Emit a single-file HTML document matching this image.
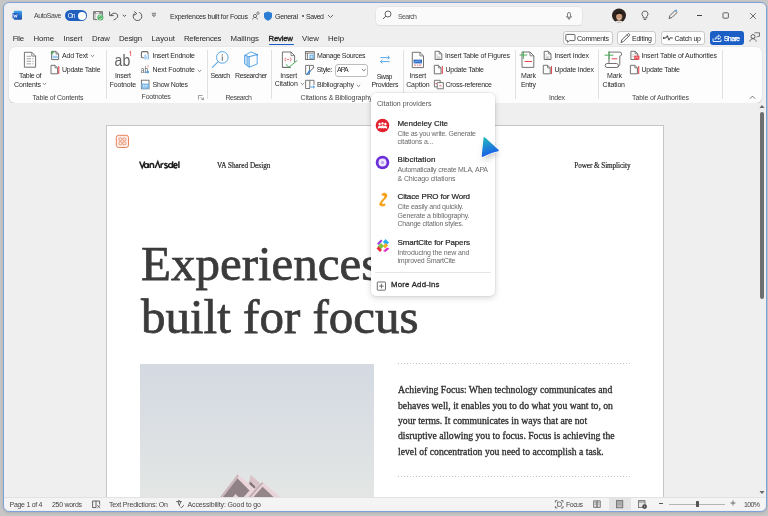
<!DOCTYPE html>
<html><head><meta charset="utf-8"><style>
html,body{margin:0;padding:0;width:768px;height:516px;overflow:hidden;background:#c6c6c6}
#root{position:absolute;left:0;top:0;width:768px;height:516px;will-change:transform}
.t{position:absolute;white-space:nowrap;font-family:"Liberation Sans",sans-serif;}
.r{position:absolute}
.s{position:absolute;overflow:visible}
</style></head><body>
<div id="root"><div class="r" style="left:0px;top:0px;width:768px;height:516px;background:#c6c6c6"></div>
<div class="r" style="left:3px;top:1.5px;width:764px;height:510px;background:#efefef;border:1.2px solid #7fa2d6;border-radius:6px;box-sizing:border-box;box-shadow:0 1px 3px rgba(0,0,0,0.12)"></div>
<svg class="s" style="left:0px;top:0px;" width="30" height="30" viewBox="0 0 30 30"><defs><linearGradient id="wg" x1="0" y1="0" x2="0" y2="1"><stop offset="0" stop-color="#41a5ee"/><stop offset="0.5" stop-color="#2b7cd3"/><stop offset="1" stop-color="#1a4fae"/></linearGradient></defs><rect x="13.8" y="10.8" width="8.2" height="9" rx="1" fill="url(#wg)"/><path d="M18 13.6h4M18 15.8h4M18 18h4" stroke="rgba(0,0,0,0.08)" stroke-width="1"/><rect x="12.5" y="12.9" width="6.4" height="5.6" rx="0.7" fill="#2360c4"/><path d="M13.6 14.2l0.9 3.2 0.9-2.4 0.9 2.4 0.9-3.2" fill="none" stroke="#fff" stroke-width="0.75" stroke-linejoin="round"/></svg>
<div class="t" style="left:34.00px;top:12.00px;font-size:7px;line-height:7px;letter-spacing:-0.407px;font-weight:400;color:#444;font-family:'Liberation Sans', sans-serif;">AutoSave</div>
<div class="r" style="left:65px;top:10px;width:22px;height:11px;background:#1f5fbf;border-radius:6px"></div>
<div class="t" style="left:67.80px;top:13.00px;font-size:6.5px;line-height:6.5px;letter-spacing:-1.171px;font-weight:400;color:#fff;font-family:'Liberation Sans', sans-serif;">On</div>
<div class="r" style="left:77.5px;top:11.5px;width:8px;height:8px;background:#fff;border-radius:50%"></div>
<svg class="s" style="left:0px;top:0px;" width="768" height="30" viewBox="0 0 768 30"><path d="M93.6 11.6h8.8v4.2M93.6 11.6v8h3.6" fill="none" stroke="#6e6e6e" stroke-width="1"/><path d="M93.6 11.6h8.8v2.2h-8.8z" fill="#8a8a8a"/><rect x="96" y="12.2" width="3.2" height="1.2" fill="#fff"/><path d="M95 13.8v5.8" stroke="#9a9a9a" stroke-width="0.8"/><circle cx="100.4" cy="17.4" r="3" fill="#4cb05e"/><path d="M98.8 17.2a1.7 1.7 0 0 1 3-1M102 17.6a1.7 1.7 0 0 1-3 1" fill="none" stroke="#fff" stroke-width="0.7"/><path d="M110.6 15.2Q113 12.6 115.6 13.2Q118.6 14.2 117.6 17Q116.8 18.6 113.6 20" fill="none" stroke="#5a5a5a" stroke-width="1"/><path d="M109.6 11.6v4h4" fill="none" stroke="#5a5a5a" stroke-width="1"/><path d="M122.8 15l1.6 1.4 1.6-1.4" fill="none" stroke="#444" stroke-width="0.9"/><path d="M134.3 13.4A4.3 4.3 0 1 0 139.2 12.3" fill="none" stroke="#5a5a5a" stroke-width="1"/><path d="M134.2 11.4l2.6 2.2-2.8 1.6" fill="none" stroke="#5a5a5a" stroke-width="1"/><path d="M151.8 13.3h4.2M152.2 15l1.7 1.7 1.7-1.7z" fill="none" stroke="#5a5a5a" stroke-width="0.8"/></svg>
<div class="t" style="left:170.00px;top:13.00px;font-size:7px;line-height:7px;letter-spacing:-0.247px;font-weight:400;color:#2a2a2a;font-family:'Liberation Sans', sans-serif;">Experiences built for Focus</div>
<svg class="s" style="left:252px;top:11px;" width="8" height="9" viewBox="0 0 8 9"><circle cx="3" cy="5" r="1.6" fill="none" stroke="#555" stroke-width="0.8"/><path d="M0.5 8.5c0.5-1.5 1.5-2 2.5-2s2 .5 2.5 2" fill="none" stroke="#555" stroke-width="0.8"/><circle cx="6" cy="2.2" r="1.2" fill="none" stroke="#555" stroke-width="0.7"/></svg>
<svg class="s" style="left:263px;top:11px;" width="10" height="10" viewBox="0 0 10 10"><path d="M5 0.5L9 2v3.2C9 7.5 7.3 9 5 9.8 2.7 9 1 7.5 1 5.2V2z" fill="#2b7cd3"/></svg>
<div class="t" style="left:275.00px;top:13.00px;font-size:7px;line-height:7px;letter-spacing:-0.318px;font-weight:400;color:#2a2a2a;font-family:'Liberation Sans', sans-serif;">General</div>
<div class="r" style="left:301.5px;top:15px;width:2px;height:2px;background:#444;border-radius:50%"></div>
<div class="t" style="left:306.00px;top:13.00px;font-size:7px;line-height:7px;letter-spacing:-0.461px;font-weight:400;color:#2a2a2a;font-family:'Liberation Sans', sans-serif;">Saved</div>
<svg class="s" style="left:327px;top:14px;" width="7" height="5" viewBox="0 0 7 5"><path d="M1 1l2.5 2.5L6 1" fill="none" stroke="#555" stroke-width="0.9"/></svg>
<div class="r" style="left:375.5px;top:6.5px;width:206px;height:18px;background:#fafafa;border-radius:4px;box-shadow:0 0 0 0.5px #dedede, 0 1px 1px rgba(0,0,0,0.08)"></div>
<svg class="s" style="left:382px;top:10px;" width="10" height="10" viewBox="0 0 10 10"><circle cx="6" cy="4" r="3" fill="none" stroke="#555" stroke-width="0.9"/><path d="M3.8 6.2L1 9" stroke="#555" stroke-width="1"/></svg>
<div class="t" style="left:398.00px;top:13.00px;font-size:7px;line-height:7px;letter-spacing:-0.635px;font-weight:400;color:#555;font-family:'Liberation Sans', sans-serif;">Search</div>
<svg class="s" style="left:566px;top:12px;" width="6" height="8" viewBox="0 0 6 8"><rect x="1.5" y="0.5" width="3" height="5" rx="1.5" fill="none" stroke="#666" stroke-width="0.8"/><path d="M0.6 4c0 1.5 1 2.3 2.4 2.3S5.4 5.5 5.4 4M3 6.3V8" fill="none" stroke="#666" stroke-width="0.8"/></svg>
<svg class="s" style="left:611px;top:8px;" width="16" height="15" viewBox="0 0 16 15"><defs><clipPath id="av"><circle cx="8" cy="7.5" r="7"/></clipPath></defs><g clip-path="url(#av)"><rect width="16" height="15" fill="#2e241f"/><ellipse cx="8.2" cy="8.6" rx="3.1" ry="3.7" fill="#c99878"/><path d="M4.6 7.6Q5 3.6 8.4 3.8Q11.6 4 11.8 7.4Q10.6 5.6 8.2 5.8Q6 6 4.6 7.6z" fill="#1d1512"/><path d="M6.6 10.6q1.6 1 3.2 0" fill="none" stroke="#f3e6e0" stroke-width="0.7"/><path d="M2 16Q4 12.6 8 12.6T14 16z" fill="#e9e1dc"/></g></svg>
<svg class="s" style="left:641px;top:10px;" width="8" height="11" viewBox="0 0 8 11"><path d="M4 1a3 3 0 0 0-1.8 5.4V8h3.6V6.4A3 3 0 0 0 4 1z" fill="none" stroke="#555" stroke-width="0.9"/><path d="M2.8 9.5h2.4" stroke="#555" stroke-width="0.9"/></svg>
<svg class="s" style="left:667px;top:9px;" width="11" height="11" viewBox="0 0 11 11"><path d="M2 9.5l1-3 5-5 2 2-5 5z" fill="none" stroke="#555" stroke-width="0.9"/><circle cx="9.2" cy="1.6" r="1" fill="#5aa8e8"/></svg>
<div class="r" style="left:696.5px;top:15.2px;width:5.5px;height:0.8px;background:#444"></div>
<svg class="s" style="left:722px;top:12px;" width="7" height="7" viewBox="0 0 7 7"><rect x="1" y="0.8" width="5.4" height="5.4" rx="0.8" fill="none" stroke="#444" stroke-width="0.8"/></svg>
<svg class="s" style="left:749px;top:12px;" width="8" height="8" viewBox="0 0 8 8"><path d="M1.2 1.2l5.6 5.6M6.8 1.2L1.2 6.8" stroke="#555" stroke-width="0.85"/></svg>
<div class="t" style="left:12.70px;top:35.00px;font-size:7.8px;line-height:7.8px;letter-spacing:-0.422px;font-weight:400;color:#2a2a2a;font-family:'Liberation Sans', sans-serif;">File</div>
<div class="t" style="left:33.50px;top:35.00px;font-size:7.8px;line-height:7.8px;letter-spacing:-0.103px;font-weight:400;color:#2a2a2a;font-family:'Liberation Sans', sans-serif;">Home</div>
<div class="t" style="left:63.50px;top:35.00px;font-size:7.8px;line-height:7.8px;letter-spacing:-0.102px;font-weight:400;color:#2a2a2a;font-family:'Liberation Sans', sans-serif;">Insert</div>
<div class="t" style="left:92.00px;top:35.00px;font-size:7.8px;line-height:7.8px;letter-spacing:-0.074px;font-weight:400;color:#2a2a2a;font-family:'Liberation Sans', sans-serif;">Draw</div>
<div class="t" style="left:119.00px;top:35.00px;font-size:7.8px;line-height:7.8px;letter-spacing:-0.256px;font-weight:400;color:#2a2a2a;font-family:'Liberation Sans', sans-serif;">Design</div>
<div class="t" style="left:151.50px;top:35.00px;font-size:7.8px;line-height:7.8px;letter-spacing:0.017px;font-weight:400;color:#2a2a2a;font-family:'Liberation Sans', sans-serif;">Layout</div>
<div class="t" style="left:184.00px;top:35.00px;font-size:7.8px;line-height:7.8px;letter-spacing:-0.265px;font-weight:400;color:#2a2a2a;font-family:'Liberation Sans', sans-serif;">References</div>
<div class="t" style="left:230.50px;top:35.00px;font-size:7.8px;line-height:7.8px;letter-spacing:-0.016px;font-weight:400;color:#2a2a2a;font-family:'Liberation Sans', sans-serif;">Mailings</div>
<div class="t" style="left:302.00px;top:35.00px;font-size:7.8px;line-height:7.8px;letter-spacing:0.071px;font-weight:400;color:#2a2a2a;font-family:'Liberation Sans', sans-serif;">View</div>
<div class="t" style="left:328.00px;top:35.00px;font-size:7.8px;line-height:7.8px;letter-spacing:-0.015px;font-weight:400;color:#2a2a2a;font-family:'Liberation Sans', sans-serif;">Help</div>
<div class="t" style="left:268.50px;top:35.00px;font-size:7.8px;line-height:7.8px;letter-spacing:-0.220px;font-weight:400;color:#222;font-family:'Liberation Sans', sans-serif;-webkit-text-stroke:0.35px #222">Review</div>
<div class="r" style="left:268.5px;top:43.5px;width:25px;height:1.5px;background:#1a5fc8;border-radius:1px"></div>
<div class="r" style="left:562.5px;top:31px;width:50.0px;height:13.8px;background:#fdfdfd;border:1px solid #c9c9c9;border-radius:3px;box-sizing:border-box"></div>
<div class="t" style="left:577.00px;top:35.00px;font-size:7px;line-height:7px;letter-spacing:-0.264px;font-weight:400;color:#2a2a2a;font-family:'Liberation Sans', sans-serif;">Comments</div>
<svg class="s" style="left:565px;top:33px;" width="11" height="11" viewBox="0 0 11 11"><path d="M1.6 1.4h7.6q0.8 0 0.8 0.8v4.6q0 0.8-0.8 0.8H4.6L2.6 9.4V7.6H1.6q-0.8 0-0.8-0.8V2.2q0-0.8 0.8-0.8z" fill="none" stroke="#555" stroke-width="0.9" stroke-linejoin="round"/></svg>
<div class="r" style="left:617px;top:31px;width:39px;height:13.8px;background:#fdfdfd;border:1px solid #c9c9c9;border-radius:3px;box-sizing:border-box"></div>
<div class="t" style="left:632.00px;top:35.00px;font-size:7px;line-height:7px;letter-spacing:-0.234px;font-weight:400;color:#2a2a2a;font-family:'Liberation Sans', sans-serif;">Editing</div>
<svg class="s" style="left:619px;top:32px;" width="12" height="12" viewBox="0 0 12 12"><path d="M2 10.6l0.7-2.6 6-6q0.8-0.8 1.6 0t0 1.6l-6 6z" fill="none" stroke="#555" stroke-width="0.95" stroke-linejoin="round"/><path d="M7.8 2.8l1.6 1.6" stroke="#555" stroke-width="0.8"/></svg>
<div class="r" style="left:660.5px;top:31px;width:44.5px;height:13.8px;background:#fdfdfd;border:1px solid #c9c9c9;border-radius:3px;box-sizing:border-box"></div>
<div class="t" style="left:674.50px;top:35.00px;font-size:7px;line-height:7px;letter-spacing:-0.216px;font-weight:400;color:#2a2a2a;font-family:'Liberation Sans', sans-serif;">Catch up</div>
<svg class="s" style="left:662px;top:33px;" width="12" height="10" viewBox="0 0 12 10"><circle cx="1.8" cy="5" r="0.9" fill="#333"/><path d="M2.6 5h1.4l1.3-2.4 1.6 4.6 1.4-2.6 0.7 0.4h1.8" fill="none" stroke="#333" stroke-width="0.9" stroke-linejoin="round"/></svg>
<div class="r" style="left:709.5px;top:31px;width:34.5px;height:14px;background:#1b5fc6;border-radius:3px"></div>
<svg class="s" style="left:712px;top:34px;" width="10" height="8" viewBox="0 0 10 8"><path d="M1 4.5v3h8v-2" fill="none" stroke="#fff" stroke-width="0.9"/><path d="M3 5.5c0-2 1.5-3 3.5-3V1l2.5 2.3-2.5 2.2V4C5 4 3.8 4.5 3 5.5z" fill="none" stroke="#fff" stroke-width="0.8"/></svg>
<div class="t" style="left:723.75px;top:35.00px;font-size:7.2px;line-height:7.2px;letter-spacing:-0.702px;font-weight:400;color:#fff;font-family:'Liberation Sans', sans-serif;-webkit-text-stroke:0.25px #fff">Share</div>
<svg class="s" style="left:749px;top:32px;" width="12" height="10" viewBox="0 0 12 10"><circle cx="4" cy="4.5" r="2" fill="none" stroke="#555" stroke-width="0.9"/><path d="M0.8 9.5c0.5-2 1.7-2.8 3.2-2.8s2.7.8 3.2 2.8" fill="none" stroke="#555" stroke-width="0.9"/><path d="M5.5 0.8h5v3.5H8.5l-1.2 1.2" fill="none" stroke="#555" stroke-width="0.8"/></svg>
<div class="r" style="left:8.5px;top:47px;width:753px;height:55.5px;background:#fdfdfd;border-radius:6px;box-shadow:0 1px 1px rgba(0,0,0,0.14),0 0 0 0.5px rgba(0,0,0,0.05)"></div>
<div class="r" style="left:105.5px;top:50px;width:0.8px;height:49px;background:#e1e1e1"></div>
<div class="r" style="left:206.5px;top:50px;width:0.8px;height:49px;background:#e1e1e1"></div>
<div class="r" style="left:271px;top:50px;width:0.8px;height:49px;background:#e1e1e1"></div>
<div class="r" style="left:402.5px;top:50px;width:0.8px;height:49px;background:#e1e1e1"></div>
<div class="r" style="left:514.5px;top:50px;width:0.8px;height:49px;background:#e1e1e1"></div>
<div class="r" style="left:598px;top:50px;width:0.8px;height:49px;background:#e1e1e1"></div>
<div class="r" style="left:721.5px;top:50px;width:0.8px;height:49px;background:#e1e1e1"></div>
<div class="t" style="left:19.00px;top:72.00px;font-size:7px;line-height:7px;letter-spacing:-0.291px;font-weight:400;color:#2a2a2a;font-family:'Liberation Sans', sans-serif;">Table of</div>
<div class="t" style="left:14.00px;top:81.00px;font-size:7px;line-height:7px;letter-spacing:-0.145px;font-weight:400;color:#2a2a2a;font-family:'Liberation Sans', sans-serif;">Contents</div>
<svg class="s" style="left:42px;top:82px;" width="5" height="4" viewBox="0 0 5 4"><path d="M0.8 1l1.7 1.6 1.7-1.6" fill="none" stroke="#555" stroke-width="0.7"/></svg>
<div class="t" style="left:61.90px;top:52.00px;font-size:7px;line-height:7px;letter-spacing:-0.144px;font-weight:400;color:#2a2a2a;font-family:'Liberation Sans', sans-serif;">Add Text</div>
<svg class="s" style="left:90px;top:54px;" width="5" height="4" viewBox="0 0 5 4"><path d="M0.8 1l1.7 1.6 1.7-1.6" fill="none" stroke="#555" stroke-width="0.7"/></svg>
<div class="t" style="left:61.90px;top:66.00px;font-size:7px;line-height:7px;letter-spacing:-0.220px;font-weight:400;color:#2a2a2a;font-family:'Liberation Sans', sans-serif;">Update Table</div>
<div class="t" style="left:32.50px;top:94.00px;font-size:7px;line-height:7px;letter-spacing:-0.218px;font-weight:400;color:#444;font-family:'Liberation Sans', sans-serif;">Table of Contents</div>
<div class="t" style="left:114.90px;top:72.00px;font-size:7px;line-height:7px;letter-spacing:-0.281px;font-weight:400;color:#2a2a2a;font-family:'Liberation Sans', sans-serif;">Insert</div>
<div class="t" style="left:109.70px;top:81.00px;font-size:7px;line-height:7px;letter-spacing:-0.161px;font-weight:400;color:#2a2a2a;font-family:'Liberation Sans', sans-serif;">Footnote</div>
<div class="t" style="left:152.50px;top:52.00px;font-size:7px;line-height:7px;letter-spacing:-0.233px;font-weight:400;color:#2a2a2a;font-family:'Liberation Sans', sans-serif;">Insert Endnote</div>
<div class="t" style="left:152.60px;top:66.00px;font-size:7px;line-height:7px;letter-spacing:-0.131px;font-weight:400;color:#2a2a2a;font-family:'Liberation Sans', sans-serif;">Next Footnote</div>
<svg class="s" style="left:197px;top:69px;" width="5" height="4" viewBox="0 0 5 4"><path d="M0.8 1l1.7 1.6 1.7-1.6" fill="none" stroke="#555" stroke-width="0.7"/></svg>
<div class="t" style="left:152.60px;top:81.00px;font-size:7px;line-height:7px;letter-spacing:-0.260px;font-weight:400;color:#2a2a2a;font-family:'Liberation Sans', sans-serif;">Show Notes</div>
<div class="t" style="left:141.60px;top:93.00px;font-size:7px;line-height:7px;letter-spacing:-0.241px;font-weight:400;color:#444;font-family:'Liberation Sans', sans-serif;">Footnotes</div>
<svg class="s" style="left:198px;top:95px;" width="7" height="5" viewBox="0 0 7 5"><path d="M0.5 0.5h4M0.5 0.5v4" stroke="#777" stroke-width="0.7"/><path d="M2.5 2.5l3 2M5.5 2.5v2h-2" fill="none" stroke="#777" stroke-width="0.7"/></svg>
<div class="t" style="left:210.60px;top:72.00px;font-size:7px;line-height:7px;letter-spacing:-0.535px;font-weight:400;color:#2a2a2a;font-family:'Liberation Sans', sans-serif;">Search</div>
<div class="t" style="left:235.10px;top:72.00px;font-size:7px;line-height:7px;letter-spacing:-0.454px;font-weight:400;color:#2a2a2a;font-family:'Liberation Sans', sans-serif;">Researcher</div>
<div class="t" style="left:225.50px;top:94.00px;font-size:7px;line-height:7px;letter-spacing:-0.494px;font-weight:400;color:#444;font-family:'Liberation Sans', sans-serif;">Research</div>
<div class="t" style="left:280.30px;top:72.00px;font-size:7px;line-height:7px;letter-spacing:-0.121px;font-weight:400;color:#2a2a2a;font-family:'Liberation Sans', sans-serif;">Insert</div>
<div class="t" style="left:274.70px;top:80.00px;font-size:7px;line-height:7px;letter-spacing:-0.091px;font-weight:400;color:#2a2a2a;font-family:'Liberation Sans', sans-serif;">Citation</div>
<svg class="s" style="left:300px;top:82px;" width="5" height="4" viewBox="0 0 5 4"><path d="M0.8 1l1.7 1.6 1.7-1.6" fill="none" stroke="#555" stroke-width="0.7"/></svg>
<div class="t" style="left:317.00px;top:52.00px;font-size:7px;line-height:7px;letter-spacing:-0.340px;font-weight:400;color:#2a2a2a;font-family:'Liberation Sans', sans-serif;">Manage Sources</div>
<div class="t" style="left:316.80px;top:66.00px;font-size:7px;line-height:7px;letter-spacing:-0.381px;font-weight:400;color:#2a2a2a;font-family:'Liberation Sans', sans-serif;">Style:</div>
<div class="r" style="left:334.5px;top:63.5px;width:33px;height:13px;background:#fff;border:0.8px solid #bdbdbd;border-radius:3px;box-sizing:border-box"></div>
<div class="t" style="left:337.10px;top:66.00px;font-size:7px;line-height:7px;letter-spacing:-0.945px;font-weight:400;color:#2a2a2a;font-family:'Liberation Sans', sans-serif;">APA</div>
<svg class="s" style="left:361px;top:68px;" width="6" height="4" viewBox="0 0 6 4"><path d="M0.8 1l2 1.8 2-1.8" fill="none" stroke="#555" stroke-width="0.8"/></svg>
<div class="t" style="left:317.00px;top:81.00px;font-size:7px;line-height:7px;letter-spacing:-0.138px;font-weight:400;color:#2a2a2a;font-family:'Liberation Sans', sans-serif;">Bibliography</div>
<svg class="s" style="left:356px;top:84px;" width="5" height="4" viewBox="0 0 5 4"><path d="M0.8 1l1.7 1.6 1.7-1.6" fill="none" stroke="#555" stroke-width="0.7"/></svg>
<div class="t" style="left:376.80px;top:73.00px;font-size:7px;line-height:7px;letter-spacing:-0.636px;font-weight:400;color:#2a2a2a;font-family:'Liberation Sans', sans-serif;">Swap</div>
<div class="t" style="left:371.50px;top:81.00px;font-size:7px;line-height:7px;letter-spacing:-0.334px;font-weight:400;color:#2a2a2a;font-family:'Liberation Sans', sans-serif;">Providers</div>
<div class="t" style="left:300.50px;top:94.00px;font-size:7px;line-height:7px;letter-spacing:-0.101px;font-weight:400;color:#444;font-family:'Liberation Sans', sans-serif;">Citations &amp; Bibliography</div>
<div class="t" style="left:409.60px;top:72.00px;font-size:7px;line-height:7px;letter-spacing:-0.181px;font-weight:400;color:#2a2a2a;font-family:'Liberation Sans', sans-serif;">Insert</div>
<div class="t" style="left:406.20px;top:81.00px;font-size:7px;line-height:7px;letter-spacing:-0.122px;font-weight:400;color:#2a2a2a;font-family:'Liberation Sans', sans-serif;">Caption</div>
<div class="t" style="left:445.00px;top:52.00px;font-size:7px;line-height:7px;letter-spacing:-0.188px;font-weight:400;color:#2a2a2a;font-family:'Liberation Sans', sans-serif;">Insert Table of Figures</div>
<div class="t" style="left:445.50px;top:66.00px;font-size:7px;line-height:7px;letter-spacing:-0.239px;font-weight:400;color:#2a2a2a;font-family:'Liberation Sans', sans-serif;">Update Table</div>
<div class="t" style="left:445.50px;top:81.00px;font-size:7px;line-height:7px;letter-spacing:-0.263px;font-weight:400;color:#2a2a2a;font-family:'Liberation Sans', sans-serif;">Cross-reference</div>
<div class="t" style="left:521.00px;top:72.00px;font-size:7px;line-height:7px;letter-spacing:-0.189px;font-weight:400;color:#2a2a2a;font-family:'Liberation Sans', sans-serif;">Mark</div>
<div class="t" style="left:521.00px;top:81.00px;font-size:7px;line-height:7px;letter-spacing:-0.335px;font-weight:400;color:#2a2a2a;font-family:'Liberation Sans', sans-serif;">Entry</div>
<div class="t" style="left:554.50px;top:52.00px;font-size:7px;line-height:7px;letter-spacing:-0.189px;font-weight:400;color:#2a2a2a;font-family:'Liberation Sans', sans-serif;">Insert Index</div>
<div class="t" style="left:554.50px;top:66.00px;font-size:7px;line-height:7px;letter-spacing:-0.195px;font-weight:400;color:#2a2a2a;font-family:'Liberation Sans', sans-serif;">Update Index</div>
<div class="t" style="left:549.00px;top:94.00px;font-size:7px;line-height:7px;letter-spacing:-0.280px;font-weight:400;color:#444;font-family:'Liberation Sans', sans-serif;">Index</div>
<div class="t" style="left:607.00px;top:72.00px;font-size:7px;line-height:7px;letter-spacing:-0.189px;font-weight:400;color:#2a2a2a;font-family:'Liberation Sans', sans-serif;">Mark</div>
<div class="t" style="left:602.50px;top:81.00px;font-size:7px;line-height:7px;letter-spacing:-0.177px;font-weight:400;color:#2a2a2a;font-family:'Liberation Sans', sans-serif;">Citation</div>
<div class="t" style="left:641.50px;top:52.00px;font-size:7px;line-height:7px;letter-spacing:-0.115px;font-weight:400;color:#2a2a2a;font-family:'Liberation Sans', sans-serif;">Insert Table of Authorities</div>
<div class="t" style="left:641.50px;top:66.00px;font-size:7px;line-height:7px;letter-spacing:-0.239px;font-weight:400;color:#2a2a2a;font-family:'Liberation Sans', sans-serif;">Update Table</div>
<div class="t" style="left:632.00px;top:94.00px;font-size:7px;line-height:7px;letter-spacing:-0.113px;font-weight:400;color:#444;font-family:'Liberation Sans', sans-serif;">Table of Authorities</div>
<svg class="s" style="left:0px;top:0px;" width="768" height="110" viewBox="0 0 768 110"><path d="M24.4 52.3H31.8L35.6 56.099999999999994V67.2H24.4Z" fill="#fdfdfd" stroke="#6b6b6b" stroke-width="0.95" stroke-linejoin="round"/><path d="M31.8 52.3V56.099999999999994H35.6" fill="none" stroke="#6b6b6b" stroke-width="0.8"/><path d="M26.6 56.3h4.5M26.6 58.8h4.5M26.6 61.3h4.5M26.6 63.8h4.5M32.3 58.8h1.2M32.3 61.3h1.2M32.3 63.8h1.2" stroke="#8a8a8a" stroke-width="0.75"/><path d="M51.6 51.4H56.0L58.6 54.0V59.6H51.6Z" fill="#fdfdfd" stroke="#6b6b6b" stroke-width="0.95" stroke-linejoin="round"/><path d="M56.0 51.4V54.0H58.6" fill="none" stroke="#6b6b6b" stroke-width="0.8"/><rect x="52.6" y="55.8" width="5" height="2.4" fill="#7fbdf0"/><path d="M53 57h4" stroke="#fff" stroke-width="0.5"/><path d="M50.6 52.6h3.6M52.4 50.8v3.6" stroke="#4cae5a" stroke-width="0.9"/><path d="M51 65.3H55.0L57.6 67.89999999999999V73.8H51Z" fill="#fdfdfd" stroke="#6b6b6b" stroke-width="0.95" stroke-linejoin="round"/><path d="M55.0 65.3V67.89999999999999H57.6" fill="none" stroke="#6b6b6b" stroke-width="0.8"/><path d="M58.8 66V74" stroke="#e8474f" stroke-width="1.1"/><text x="114.6" y="65.5" font-size="16.5" font-family="Liberation Sans" fill="#5e5e5e" textLength="15.6" lengthAdjust="spacingAndGlyphs">ab</text><path d="M129.4 52.2L130.6 51.2V55.8" fill="none" stroke="#e8474f" stroke-width="0.8"/><rect x="141.4" y="51.6" width="6.6" height="6.2" rx="1.3" fill="#fdfdfd" stroke="#6b6b6b" stroke-width="1.1"/><rect x="143.8" y="54.4" width="5.6" height="5.4" fill="#fdfdfd"/><path d="M145 55v4.2h0.8M148.4 55v4.2h-0.8M145 55h0.8M148.4 55h-0.8M146.7 56.5v2" fill="none" stroke="#3d97e3" stroke-width="0.7"/><text x="140.8" y="72.6" font-size="8.6" font-family="Liberation Sans" fill="#666" textLength="7.4" lengthAdjust="spacingAndGlyphs">ab</text><path d="M148 65.2v2.2" stroke="#e8474f" stroke-width="0.6"/><path d="M144.8 72h4M147.6 70.6l1.4 1.4-1.4 1.4" fill="none" stroke="#3d97e3" stroke-width="0.9"/><rect x="141.4" y="80.2" width="7.6" height="8.6" fill="#fdfdfd" stroke="#6b6b6b" stroke-width="0.9"/><rect x="141.4" y="83.6" width="7.6" height="5.2" fill="#74b6ec"/><rect x="143.4" y="85.2" width="3.6" height="1.8" fill="none" stroke="#fff" stroke-width="0.5"/><circle cx="222.3" cy="57.4" r="5.8" fill="#fdfdfd" stroke="#56a7e6" stroke-width="1"/><circle cx="222.3" cy="54.9" r="0.6" fill="#555"/><path d="M222.3 56.4v4.4" stroke="#555" stroke-width="0.9"/><path d="M218.2 61.6L212.4 67.4" stroke="#56a7e6" stroke-width="1.1" stroke-linecap="round"/><g fill="#fdfdfd" stroke="#4a9de3" stroke-width="0.9" stroke-linejoin="round"><path d="M244.6 55.4L251 51.9 257.2 54.6 249.2 56.8z"/><path d="M244.6 55.4V63.8L249.2 67.2V56.8z"/><path d="M249.2 56.8L257.2 54.6V64L249.2 67.2z"/></g><path d="M246.1 56.3V64.9M247.6 56.6V66.1" stroke="#4a9de3" stroke-width="0.7"/><circle cx="257" cy="54.8" r="0.8" fill="#2f86dc"/><path d="M282.4 52H291L294.6 55.6V62.2M290.6 67.4H282.4Z" fill="#fdfdfd" stroke="#6b6b6b" stroke-width="0.95" stroke-linejoin="round"/><path d="M282.4 52V67.4" stroke="#6b6b6b" stroke-width="0.95"/><path d="M291 52V55.6H294.6" fill="none" stroke="#6b6b6b" stroke-width="0.8"/><path d="M285.6 57.6Q284.2 59.5 285.6 61.4M290.4 57.6Q291.8 59.5 290.4 61.4M286.9 59.5h2.2" fill="none" stroke="#ec6a70" stroke-width="0.9"/><path d="M285.8 64.2L288.9 67.2L297.3 60.4" fill="none" stroke="#4cae5a" stroke-width="1"/><rect x="305.4" y="51.6" width="8.9" height="7.9" fill="#fdfdfd" stroke="#6b6b6b" stroke-width="0.9"/><path d="M305.4 53.1h8.9M307.4 53.1v6.4" stroke="#6b6b6b" stroke-width="0.9"/><rect x="309.4" y="54.6" width="4.4" height="4.4" fill="#74b6ec"/><path d="M311.6 55.6v2.4M310.4 56.8h2.4" stroke="#fff" stroke-width="0.6"/><path d="M305.6 65.4h3.9v8.8h-3.9z" fill="#fdfdfd" stroke="#6b6b6b" stroke-width="0.9"/><path d="M309.5 65.4h3.9v2.6" fill="none" stroke="#6b6b6b" stroke-width="0.9"/><path d="M313.9 67.4L310 71.4" stroke="#555" stroke-width="0.9"/><path d="M310.4 71L307 74.8Q306.6 75 306.8 74.5L309.4 70.4z" fill="#2f86dc" stroke="#2f86dc" stroke-width="0.9" stroke-linejoin="round"/><path d="M305.6 80.3h4.2v8.2h-4.2zM309.8 80.3h4.2v4.6" fill="#fdfdfd" stroke="#6b6b6b" stroke-width="0.9"/><path d="M310.4 87h4M313 85.6l1.5 1.4-1.5 1.4" fill="none" stroke="#3d97e3" stroke-width="0.9"/><path d="M380.4 57.6h9M387.6 55.9l1.9 1.7-1.9 1.7M389.6 61.6h-9M382.4 59.9l-1.9 1.7 1.9 1.7" fill="none" stroke="#4aa0e6" stroke-width="0.9"/><path d="M412.3 52.3H419.9L423.5 55.9V67.6H412.3Z" fill="#fdfdfd" stroke="#6b6b6b" stroke-width="0.95" stroke-linejoin="round"/><path d="M419.9 52.3V55.9H423.5" fill="none" stroke="#6b6b6b" stroke-width="0.8"/><rect x="413.6" y="59.6" width="8.4" height="3.8" fill="#2b6cc4"/><path d="M414.4 62.6l1.8-1.6 1.4 1 1.4-1.4 2 2" fill="none" stroke="#bfe0ff" stroke-width="0.6"/><path d="M414.2 65.1h1.8M416.8 65.1h1.4M419 65.1h2.4" stroke="#e8474f" stroke-width="0.8"/><path d="M435.1 51.3H439.2L441.8 53.9V59.5H435.1Z" fill="#fdfdfd" stroke="#6b6b6b" stroke-width="0.95" stroke-linejoin="round"/><path d="M439.2 51.3V53.9H441.8" fill="none" stroke="#6b6b6b" stroke-width="0.8"/><path d="M436.5 55h1.2M436.5 57h3.8M436.5 58.3h3.8" stroke="#8a8a8a" stroke-width="0.55"/><path d="M434.3 65.3H438.4L441 67.89999999999999V73.8H434.3Z" fill="#fdfdfd" stroke="#6b6b6b" stroke-width="0.95" stroke-linejoin="round"/><path d="M438.4 65.3V67.89999999999999H441" fill="none" stroke="#6b6b6b" stroke-width="0.8"/><path d="M442.3 66V74" stroke="#e8474f" stroke-width="1.1"/><path d="M434.4 80.3h5.8v6.6h-5.8z" fill="#fdfdfd" stroke="#6b6b6b" stroke-width="0.9"/><path d="M437.2 82.6h6.2v6.2h-6.2z" fill="#fdfdfd" stroke="#6b6b6b" stroke-width="0.9"/><path d="M435.4 83.6h1.4M439.4 85.8h2" stroke="#e8474f" stroke-width="0.9"/><path d="M522 52H530.0L533.8 55.8V67.4H522Z" fill="#fdfdfd" stroke="#6b6b6b" stroke-width="0.95" stroke-linejoin="round"/><path d="M530.0 52V55.8H533.8" fill="none" stroke="#6b6b6b" stroke-width="0.8"/><path d="M519.6 55h7.6M523.4 51.2v7.6" stroke="#4cae5a" stroke-width="1"/><path d="M524.6 61.5h7.4" stroke="#e8474f" stroke-width="1"/><path d="M544.2 51.3H548.4L551 53.9V59.5H544.2Z" fill="#fdfdfd" stroke="#6b6b6b" stroke-width="0.95" stroke-linejoin="round"/><path d="M548.4 51.3V53.9H551" fill="none" stroke="#6b6b6b" stroke-width="0.8"/><path d="M545.6 55h1.2M545.6 57h3.8M545.6 58.3h3.8" stroke="#8a8a8a" stroke-width="0.55"/><path d="M543.3 65.3H547.6L550.2 67.89999999999999V73.8H543.3Z" fill="#fdfdfd" stroke="#6b6b6b" stroke-width="0.95" stroke-linejoin="round"/><path d="M547.6 65.3V67.89999999999999H550.2" fill="none" stroke="#6b6b6b" stroke-width="0.8"/><path d="M551.5 66V74" stroke="#e8474f" stroke-width="1.1"/><g fill="#fdfdfd" stroke="#6b6b6b" stroke-width="0.95" stroke-linejoin="round"><path d="M609 63.4V52.1H619.6Q621.6 52.1 621.6 54.1Q621.6 56 619.8 56V64.5L617.8 67.5"/><path d="M607 63.5H616.4Q618.4 63.5 618.4 65.5Q618.4 67.5 616.4 67.5H607Q605.2 67.5 605.2 65.5Q605.2 63.5 607 63.5Z"/></g><path d="M604.6 55.2h8.8M609 51v8.6" stroke="#4cae5a" stroke-width="1"/><path d="M611.6 58.8h5.6" stroke="#e8474f" stroke-width="1"/><path d="M630.9 51.3H635.1999999999999L637.8 53.9V59.5H630.9Z" fill="#fdfdfd" stroke="#6b6b6b" stroke-width="0.95" stroke-linejoin="round"/><path d="M635.1999999999999 51.3V53.9H637.8" fill="none" stroke="#6b6b6b" stroke-width="0.8"/><path d="M632.3 54.8h1.2M632.3 56.6h1.4" stroke="#8a8a8a" stroke-width="0.55"/><path d="M634.2 55.6h5.2v4.2h-5.2z" fill="#e8474f"/><path d="M635.4 58.6l1.4-2 1.4 2" fill="none" stroke="#fff" stroke-width="0.5"/><path d="M630.4 65.3H634.8L637.4 67.89999999999999V73.8H630.4Z" fill="#fdfdfd" stroke="#6b6b6b" stroke-width="0.95" stroke-linejoin="round"/><path d="M634.8 65.3V67.89999999999999H637.4" fill="none" stroke="#6b6b6b" stroke-width="0.8"/><path d="M638.7 66V74" stroke="#e8474f" stroke-width="1.1"/></svg>
<svg class="s" style="left:749px;top:95px;" width="7" height="5" viewBox="0 0 7 5"><path d="M0.8 3.8l2.7-2.7 2.7 2.7" fill="none" stroke="#555" stroke-width="0.8"/></svg>
<div class="r" style="left:4px;top:103px;width:756px;height:394px;background:#efefef"></div>
<div class="r" style="left:107px;top:126px;width:556px;height:371px;background:#fff;box-shadow:0 0 0 1px #c6c6c6"></div>
<svg class="s" style="left:759px;top:104px;" width="6" height="5" viewBox="0 0 6 5"><path d="M0.5 4L3 1l2.5 3z" fill="#666"/></svg>
<div class="r" style="left:760px;top:112px;width:4px;height:186.5px;background:#6f6f6f;border-radius:2px"></div>
<svg class="s" style="left:759px;top:490px;" width="6" height="5" viewBox="0 0 6 5"><path d="M0.5 1L3 4l2.5-3z" fill="#666"/></svg>
<svg class="s" style="left:115px;top:134px;" width="15" height="15" viewBox="0 0 15 15"><rect x="1.3" y="1.3" width="12.2" height="12.2" rx="2.2" fill="#fcefe9" stroke="#e9825c" stroke-width="1"/><g fill="none" stroke="#e9825c" stroke-width="0.8"><rect x="3.9" y="3.9" width="3.1" height="3" rx="1.2"/><rect x="7.8" y="3.9" width="3.1" height="3" rx="1.2"/><rect x="3.9" y="7.9" width="3.1" height="3" rx="1.2"/><rect x="7.8" y="7.9" width="3.1" height="3" rx="1.2"/></g></svg>
<svg class="s" style="left:136px;top:156px;" width="48" height="16" viewBox="0 0 48 16"><g fill="none" stroke="#1e1e1e" stroke-width="1.45" stroke-linecap="butt"><path d="M3.6 5.4L6.2 11.8 8.7 5.4"/><circle cx="10.3" cy="9.6" r="2"/><path d="M12.3 7.4V11.9"/><path d="M14.1 11.9V7.4M14.1 9.4Q14.1 7.5 15.9 7.5Q17.6 7.5 17.6 9.4V11.9"/><path d="M19.2 11.9L21.8 5.5 23.9 11.9"/><path d="M25.1 11.9V7.4M25.1 9.5Q25.1 7.5 27.6 7.5"/><path d="M31.4 8Q30.6 7.4 29.6 7.5Q28.5 7.7 28.8 8.8Q29.1 9.5 30.3 9.7Q31.6 10 31.5 10.9Q31.3 11.9 29.9 11.9Q28.9 11.9 28.4 11.3"/><circle cx="34.6" cy="9.6" r="2"/><path d="M36.6 5.3V11.9"/><path d="M37.9 9.6H41Q41 7.5 39.5 7.5Q37.8 7.5 37.8 9.7Q37.8 11.9 39.5 11.9Q40.5 11.9 41 11.3"/><path d="M42.9 5.3V11.9"/></g></svg>
<div class="t" style="left:217.00px;top:163.00px;font-size:7.2px;line-height:7.2px;letter-spacing:0.029px;font-weight:400;color:#2a2a2a;font-family:'Liberation Serif', serif;-webkit-text-stroke:0.2px #2a2a2a">VA Shared Design</div>
<div class="t" style="left:574.30px;top:163.00px;font-size:7.2px;line-height:7.2px;letter-spacing:-0.076px;font-weight:400;color:#2a2a2a;font-family:'Liberation Serif', serif;-webkit-text-stroke:0.2px #2a2a2a">Power &amp; Simplicity</div>
<div class="t" style="left:141.00px;top:239.00px;font-size:49px;line-height:49px;letter-spacing:0.000px;font-weight:400;color:#3b3b3b;font-family:'Liberation Serif', serif;-webkit-text-stroke:0.75px #3b3b3b">Experiences</div>
<div class="t" style="left:141.00px;top:292.00px;font-size:49px;line-height:49px;letter-spacing:0.000px;font-weight:400;color:#3b3b3b;font-family:'Liberation Serif', serif;-webkit-text-stroke:0.75px #3b3b3b">built for focus</div>
<div class="r" style="left:398px;top:363px;width:234px;height:1px;background-image:linear-gradient(90deg,#c4c4c4 50%,transparent 50%);background-size:3px 1px"></div>
<div class="r" style="left:398px;top:475.5px;width:234px;height:1px;background-image:linear-gradient(90deg,#c4c4c4 50%,transparent 50%);background-size:3px 1px"></div>
<div class="t" style="left:398.00px;top:385.00px;font-size:9.7px;line-height:9.7px;letter-spacing:0.000px;font-weight:400;color:#2e2e2e;font-family:'Liberation Serif', serif;-webkit-text-stroke:0.3px #2e2e2e">Achieving Focus: When technology communicates and</div>
<div class="t" style="left:398.00px;top:401.00px;font-size:9.7px;line-height:9.7px;letter-spacing:0.000px;font-weight:400;color:#2e2e2e;font-family:'Liberation Serif', serif;-webkit-text-stroke:0.3px #2e2e2e">behaves well, it enables you to do what you want to, on</div>
<div class="t" style="left:398.00px;top:416.00px;font-size:9.7px;line-height:9.7px;letter-spacing:0.000px;font-weight:400;color:#2e2e2e;font-family:'Liberation Serif', serif;-webkit-text-stroke:0.3px #2e2e2e">your terms. It communicates in ways that are not</div>
<div class="t" style="left:398.00px;top:431.00px;font-size:9.7px;line-height:9.7px;letter-spacing:0.000px;font-weight:400;color:#2e2e2e;font-family:'Liberation Serif', serif;-webkit-text-stroke:0.3px #2e2e2e">disruptive allowing you to focus. Focus is achieving the</div>
<div class="t" style="left:398.00px;top:447.00px;font-size:9.7px;line-height:9.7px;letter-spacing:0.000px;font-weight:400;color:#2e2e2e;font-family:'Liberation Serif', serif;-webkit-text-stroke:0.3px #2e2e2e">level of concentration you need to accomplish a task.</div>
<div class="r" style="left:139.5px;top:364px;width:234.5px;height:133px;background:linear-gradient(#d4d9e2,#e3e6e4)"></div>
<svg class="s" style="left:205px;top:460px;" width="90" height="37" viewBox="0 0 90 37"><path d="M40 37L45.7 14.7 58 26 55 37z" fill="#d9c3c7"/><path d="M45.2 21.5L50.5 27 48 30 44 25z" fill="#7d7074"/><path d="M15.2 37L32.8 14.1 52 31 46 37z" fill="#ead6da"/><path d="M17.8 37L32.4 18.2 44.5 30.5 38.7 37z" fill="#8f8185"/><path d="M15.2 37L32.8 14.1 33.5 16.5 18 37z" fill="#c9b5ba"/><path d="M28 37l2.5-3 3 3z" fill="#e8d6da"/><path d="M43.4 37L57.4 21.7 75 37z" fill="#e8d4d8"/><path d="M48.5 37L57.6 26.8 68.5 37z" fill="#948589"/><path d="M43.4 37L57.4 21.7 57.8 23.5 46 37z" fill="#bfaeb2"/></svg>
<div class="r" style="left:4px;top:497px;width:762px;height:13px;background:#f4f4f4;border-top:1px solid #e2e2e2;border-radius:0 0 6px 6px;box-sizing:border-box"></div>
<div class="t" style="left:9.50px;top:501.00px;font-size:7px;line-height:7px;letter-spacing:-0.280px;font-weight:400;color:#444;font-family:'Liberation Sans', sans-serif;">Page 1 of 4</div>
<div class="t" style="left:52.00px;top:501.00px;font-size:7px;line-height:7px;letter-spacing:-0.287px;font-weight:400;color:#444;font-family:'Liberation Sans', sans-serif;">250 words</div>
<div class="t" style="left:109.00px;top:501.00px;font-size:7px;line-height:7px;letter-spacing:-0.191px;font-weight:400;color:#444;font-family:'Liberation Sans', sans-serif;">Text Predictions: On</div>
<div class="t" style="left:187.50px;top:501.00px;font-size:7px;line-height:7px;letter-spacing:-0.131px;font-weight:400;color:#444;font-family:'Liberation Sans', sans-serif;">Accessibility: Good to go</div>
<div class="t" style="left:566.00px;top:501.00px;font-size:7px;line-height:7px;letter-spacing:-0.515px;font-weight:400;color:#444;font-family:'Liberation Sans', sans-serif;">Focus</div>
<div class="r" style="left:609px;top:498px;width:22px;height:12px;background:#e3e3e3"></div>
<svg class="s" style="left:0px;top:490px;" width="768" height="26" viewBox="0 490 768 26"><path d="M92.6 501h3.4v6.6h-3.4zM96 501h3.6v3.4" fill="none" stroke="#555" stroke-width="0.9"/><path d="M97.2 505.2l3 2.8M100.2 505.2l-3 2.8" stroke="#555" stroke-width="0.8"/><path d="M176.2 501.6h5.6M178.2 501.6q0 3 1.6 4.4M180.6 501.6q-0.2 2.2-1.4 3.4" fill="none" stroke="#555" stroke-width="0.9"/><circle cx="179" cy="500.4" r="0.7" fill="#555"/><path d="M180.2 506.6l1.2 1.2 2.4-2.6" fill="none" stroke="#555" stroke-width="0.9"/><path d="M555.4 502.6v-2h2M561 500.6h2v2M563 506v2h-2M557.4 508h-2v-2" fill="none" stroke="#555" stroke-width="0.8"/><path d="M557.6 502h2.2q1.8 0 1.8 2.2t-1.8 2.2h-2.2z" fill="none" stroke="#555" stroke-width="0.8"/><path d="M593.6 500.8h3.3v6.6h-3.3zM597 500.8h3.3v6.6H597z" fill="#e0e0e0" stroke="#666" stroke-width="0.8"/><path d="M594.4 502.6h1.6M594.4 504.2h1.6M597.8 502.6h1.6M597.8 504.2h1.6" stroke="#777" stroke-width="0.5"/><rect x="616.4" y="500.6" width="6.4" height="7.2" fill="#a9a9a9" stroke="#6a6a6a" stroke-width="0.8"/><path d="M617.6 506.2h4" stroke="#eee" stroke-width="0.5"/><rect x="638.4" y="500.6" width="6.6" height="7" fill="#e6e6e6" stroke="#6a6a6a" stroke-width="0.8"/><path d="M638.4 502h6.6" stroke="#6a6a6a" stroke-width="0.8"/><circle cx="644.6" cy="506.6" r="2.3" fill="#444"/><path d="M644.6 505.6v2" stroke="#fff" stroke-width="0.6"/></svg>
<div class="r" style="left:659px;top:503px;width:4px;height:0.9px;background:#555"></div>
<div class="r" style="left:669px;top:503.5px;width:56px;height:1px;background:#b5b5b5"></div>
<div class="r" style="left:696px;top:500.5px;width:3px;height:6.5px;background:#555;border-radius:0.5px"></div>
<svg class="s" style="left:730px;top:500px;" width="6" height="6" viewBox="0 0 6 6"><path d="M3 0.5v5M0.5 3h5" stroke="#555" stroke-width="0.8"/></svg>
<div class="t" style="left:744.00px;top:501.00px;font-size:7px;line-height:7px;letter-spacing:-0.635px;font-weight:400;color:#444;font-family:'Liberation Sans', sans-serif;">100%</div>
<div class="r" style="left:371px;top:92.5px;width:124px;height:203.5px;background:#fff;border-radius:5px;box-shadow:0 0 0 0.5px rgba(0,0,0,0.08),0 2px 6px rgba(0,0,0,0.16)"></div>
<div class="t" style="left:377.00px;top:100.00px;font-size:7px;line-height:7px;letter-spacing:0.002px;font-weight:400;color:#555;font-family:'Liberation Sans', sans-serif;">Citation providers</div>
<svg class="s" style="left:375px;top:118px;" width="15" height="15" viewBox="0 0 15 15"><circle cx="7.5" cy="7.5" r="6.8" fill="#e3202c"/><g fill="#fff"><circle cx="4.6" cy="6" r="1.2"/><circle cx="7.5" cy="5.4" r="1.2"/><circle cx="10.4" cy="6" r="1.2"/><path d="M2.6 10.2Q3.2 7.6 4.6 7.6Q5.6 7.6 6 8.6Q6.6 7.2 7.5 7.2Q8.4 7.2 9 8.6Q9.4 7.6 10.4 7.6Q11.8 7.6 12.4 10.2Q11 10.8 10 9.8Q9 11 7.5 10Q6 11 5 9.8Q4 10.8 2.6 10.2z"/></g></svg>
<div class="t" style="left:397.50px;top:120.00px;font-size:8px;line-height:8px;letter-spacing:-0.053px;font-weight:400;color:#2a2a2a;font-family:'Liberation Sans', sans-serif;-webkit-text-stroke:0.22px #2a2a2a">Mendeley Cite</div>
<div class="t" style="left:397.50px;top:130.00px;font-size:7px;line-height:7px;letter-spacing:-0.243px;font-weight:400;color:#6a6a6a;font-family:'Liberation Sans', sans-serif;">Cite as you write. Generate</div>
<div class="t" style="left:397.50px;top:138.00px;font-size:7px;line-height:7px;letter-spacing:-0.104px;font-weight:400;color:#6a6a6a;font-family:'Liberation Sans', sans-serif;">citations a...</div>
<svg class="s" style="left:375px;top:155px;" width="15" height="15" viewBox="0 0 15 15"><circle cx="7.5" cy="7.5" r="6.8" fill="#6b2ed8"/><circle cx="7.5" cy="7.5" r="4" fill="#f0e8ff"/><circle cx="7.5" cy="7.5" r="1.5" fill="#b89be8"/></svg>
<div class="t" style="left:397.50px;top:156.00px;font-size:8px;line-height:8px;letter-spacing:0.109px;font-weight:400;color:#2a2a2a;font-family:'Liberation Sans', sans-serif;-webkit-text-stroke:0.22px #2a2a2a">Bibcitation</div>
<div class="t" style="left:397.50px;top:166.00px;font-size:7px;line-height:7px;letter-spacing:-0.209px;font-weight:400;color:#6a6a6a;font-family:'Liberation Sans', sans-serif;">Automatically create MLA, APA</div>
<div class="t" style="left:397.50px;top:175.00px;font-size:7px;line-height:7px;letter-spacing:-0.107px;font-weight:400;color:#6a6a6a;font-family:'Liberation Sans', sans-serif;">&amp; Chicago citations</div>
<svg class="s" style="left:376px;top:191px;" width="14" height="18" viewBox="0 0 14 18"><path d="M6.5 3.6Q8.5 2.2 9.8 3.4Q10.9 4.7 9.5 6.4L5.6 10.6Q4.2 12.3 5.4 13.8Q6.6 15 8.5 13.6" fill="none" stroke="#f7a21b" stroke-width="2" stroke-linecap="round"/><circle cx="9.2" cy="4.3" r="1.6" fill="#f7a21b"/><circle cx="5" cy="13.2" r="1.7" fill="#f7a21b"/></svg>
<div class="t" style="left:397.50px;top:193.00px;font-size:8px;line-height:8px;letter-spacing:-0.138px;font-weight:400;color:#2a2a2a;font-family:'Liberation Sans', sans-serif;-webkit-text-stroke:0.22px #2a2a2a">Citace PRO for Word</div>
<div class="t" style="left:397.50px;top:203.00px;font-size:7px;line-height:7px;letter-spacing:-0.203px;font-weight:400;color:#6a6a6a;font-family:'Liberation Sans', sans-serif;">Cite easily and quickly.</div>
<div class="t" style="left:397.50px;top:212.00px;font-size:7px;line-height:7px;letter-spacing:-0.180px;font-weight:400;color:#6a6a6a;font-family:'Liberation Sans', sans-serif;">Generate a bibliography.</div>
<div class="t" style="left:397.50px;top:220.00px;font-size:7px;line-height:7px;letter-spacing:-0.201px;font-weight:400;color:#6a6a6a;font-family:'Liberation Sans', sans-serif;">Change citation styles.</div>
<svg class="s" style="left:375px;top:238px;" width="16" height="16" viewBox="0 0 16 16"><path d="M2 5.5L6 1.5 7.5 3 3.5 7z" fill="#9b3fe0"/><path d="M8 4L10.5 1 14 4.5 11 7.5z" fill="#27b2f0"/><path d="M2.5 8.5L6 5 9 8 5.5 11.5z" fill="#7cc644"/><path d="M8 8L11 5 13 7.5 10 10.5z" fill="#f5a623"/><path d="M1.5 10.5L3.5 8.5 7 12 5 14z" fill="#ea2c3f"/><path d="M8 13L12 9.5 14.5 10.5 10.5 14z" fill="#e330c6"/></svg>
<div class="t" style="left:397.50px;top:239.00px;font-size:8px;line-height:8px;letter-spacing:-0.115px;font-weight:400;color:#2a2a2a;font-family:'Liberation Sans', sans-serif;-webkit-text-stroke:0.22px #2a2a2a">SmartCite for Papers</div>
<div class="t" style="left:397.50px;top:249.00px;font-size:7px;line-height:7px;letter-spacing:-0.124px;font-weight:400;color:#6a6a6a;font-family:'Liberation Sans', sans-serif;">Introducing the new and</div>
<div class="t" style="left:397.50px;top:257.00px;font-size:7px;line-height:7px;letter-spacing:-0.227px;font-weight:400;color:#6a6a6a;font-family:'Liberation Sans', sans-serif;">improved SmartCite</div>
<div class="r" style="left:375px;top:272px;width:116px;height:0.8px;background:#e5e5e5"></div>
<svg class="s" style="left:376px;top:280px;" width="11" height="11" viewBox="0 0 11 11"><rect x="1.3" y="2" width="8.2" height="8.2" rx="0.6" fill="none" stroke="#555" stroke-width="0.85"/><path d="M5.4 3.8v4.6M3.1 6.1h4.6" stroke="#555" stroke-width="0.85"/></svg>
<div class="t" style="left:391.00px;top:281.00px;font-size:7.8px;line-height:7.8px;letter-spacing:0.231px;font-weight:400;color:#2a2a2a;font-family:'Liberation Sans', sans-serif;-webkit-text-stroke:0.3px #2a2a2a">More Add-ins</div>
<svg class="s" style="left:460px;top:115px;" width="60" height="60" viewBox="0 0 60 60"><defs><linearGradient id="cg" x1="0" y1="0" x2="0.25" y2="1"><stop offset="0" stop-color="#20b6bd"/><stop offset="1" stop-color="#1b5fe8"/></linearGradient><filter id="sh" x="-50%" y="-50%" width="200%" height="200%"><feGaussianBlur stdDeviation="3"/></filter></defs><path d="M25 27L38 38 31 40 24 46z" fill="rgba(0,0,0,0.28)" filter="url(#sh)"/><path d="M24.4 23.1L37.9 35.3Q30.5 36.6 22.6 41z" fill="#fff" stroke="#fff" stroke-width="3.2" stroke-linejoin="round"/><path d="M24.4 23.1L37.9 35.3Q30.5 36.6 22.6 41z" fill="url(#cg)" stroke="url(#cg)" stroke-width="1.8" stroke-linejoin="round"/></svg>
</div></body></html>
